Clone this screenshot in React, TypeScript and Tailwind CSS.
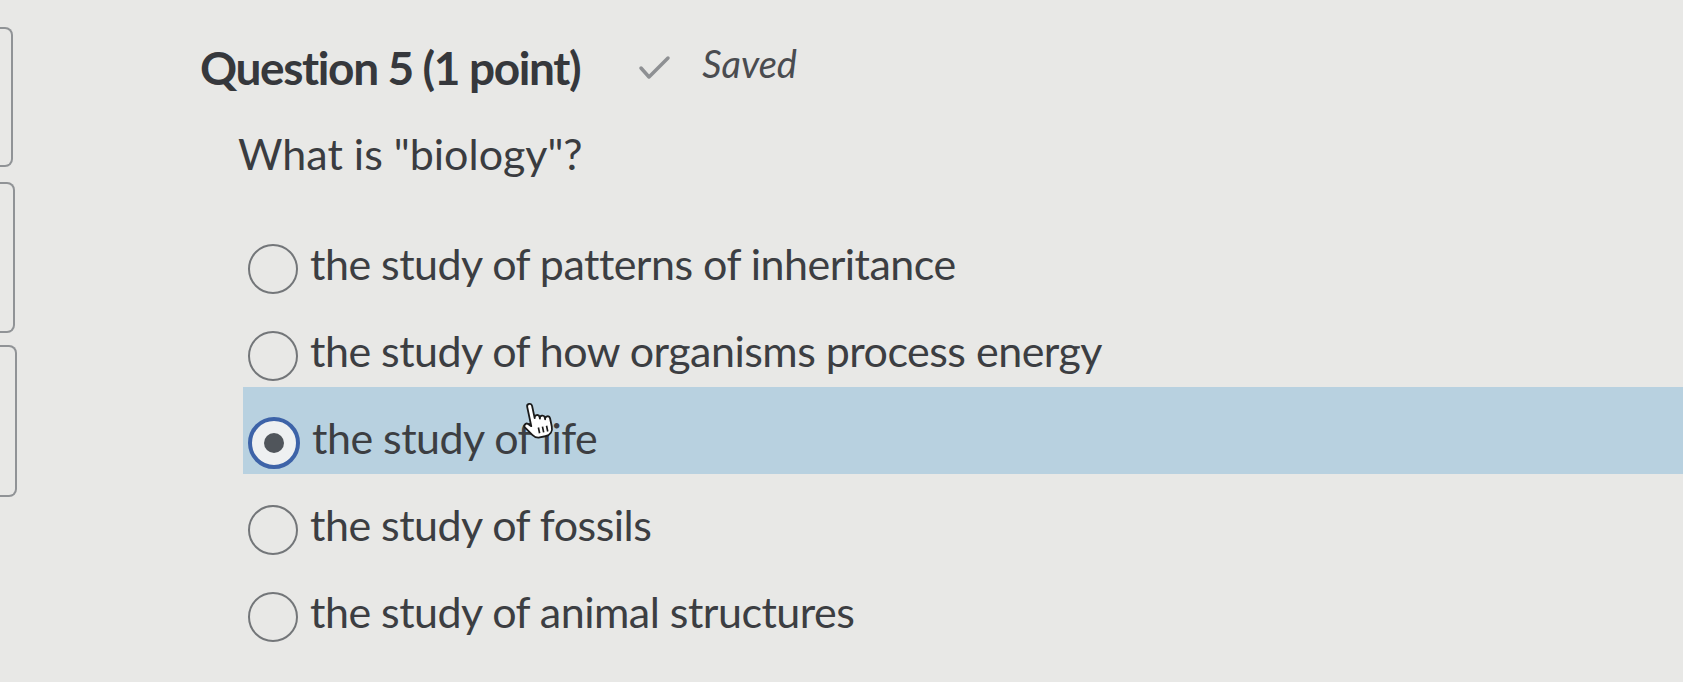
import React from "react";

const options = [
  "the study of patterns of inheritance",
  "the study of how organisms process energy",
  "the study of life",
  "the study of fossils",
  "the study of animal structures",
];

function Radio({ selected }: { selected: boolean }) {
  if (selected) {
    return (
      <div className="w-[52px] h-[52px] shrink-0 rounded-full border-[4px] border-[#3d63a8] bg-[#eef0f1] flex items-center justify-center">
        <div className="w-[20px] h-[20px] rounded-full bg-[#50555b]" />
      </div>
    );
  }
  return <div className="w-[50px] h-[50px] shrink-0 rounded-full border-2 border-[#737679] bg-[#e8e8e6]" />;
}

function HandCursor() {
  return (
    <svg width="36" height="40" viewBox="0 0 20 24" className="rotate-[-12deg]">
      <path
        d="M6 2.5a1.5 1.5 0 0 1 3 0V10a1.5 1.5 0 0 1 3 0v1a1.5 1.5 0 0 1 3 0v1a1.5 1.5 0 0 1 3 0v5c0 3-2 5-5 5H9.5c-2 0-3-1-4-2.5L2.3 14.6a1.4 1.4 0 0 1 2.1-1.9L6 14.3Z"
        fill="#ffffff"
        stroke="#1b1b1b"
        strokeWidth="1.1"
        strokeLinejoin="round"
      />
      <path d="M10 16v3.5M12.5 16v3.5M15 16v3.5" stroke="#1b1b1b" strokeWidth="1" />
    </svg>
  );
}

export default function App() {
  return (
    <div className="relative w-[1683px] h-[682px] overflow-hidden bg-[#e8e8e6] flex font-['Lato','Noto_Sans',sans-serif] text-[#3c3e42] [font-variant-ligatures:none]">
      {/* left edge boxes */}
      <div className="w-[18px] shrink-0 flex flex-col">
        <div className="mt-[27px] h-[140px] w-[13px] border-2 border-l-0 border-[#909396] rounded-r-[8px]" />
        <div className="mt-[15px] h-[151px] w-[15px] border-2 border-l-0 border-[#909396] rounded-r-[8px]" />
        <div className="mt-[12px] h-[152px] w-[17px] border-2 border-l-0 border-[#909396] rounded-r-[8px]" />
      </div>

      <div className="flex-1 flex flex-col">
        {/* title row */}
        <div className="flex items-start pl-[182px] mt-[45px]">
          <h2 className="text-[46px] leading-none font-bold tracking-[-0.03em] text-[#36383c] whitespace-nowrap">Question 5 (1 point)</h2>
          <svg width="34" height="26" viewBox="0 0 34 26" className="ml-[58px] mt-[10px]">
            <polyline points="3,13 11,22 30,3" fill="none" stroke="#8e9093" strokeWidth="3.5" strokeLinecap="round" strokeLinejoin="round" />
          </svg>
          <span className="ml-[30px] -mt-[1px] text-[38px] leading-none italic text-[#4a4c50]">Saved</span>
        </div>

        {/* question */}
        <p className="mt-[41px] pl-[220px] text-[43px] leading-none text-[#3a3c40] whitespace-nowrap">What is "biology"?</p>

        {/* options */}
        <div className="mt-[50px] pl-[225px] flex flex-col">
          {options.map((opt, i) => {
            const selected = i === 2;
            return (
              <div
                key={opt}
                className={
                  selected
                    ? "relative h-[87px] -mt-[12px] mb-[12px] pt-[24px] pl-[5px] flex items-center gap-[12px] bg-[#b8d1e0]"
                    : "h-[87px] pl-[5px] flex items-center gap-[12px]"
                }
              >
                <Radio selected={selected} />
                <span className="mb-[10px] text-[43px] leading-none tracking-[-0.012em] whitespace-nowrap">{opt}</span>
                {selected && (
                  <div className="absolute left-[276px] top-[14px]">
                    <HandCursor />
                  </div>
                )}
              </div>
            );
          })}
        </div>
      </div>
    </div>
  );
}
